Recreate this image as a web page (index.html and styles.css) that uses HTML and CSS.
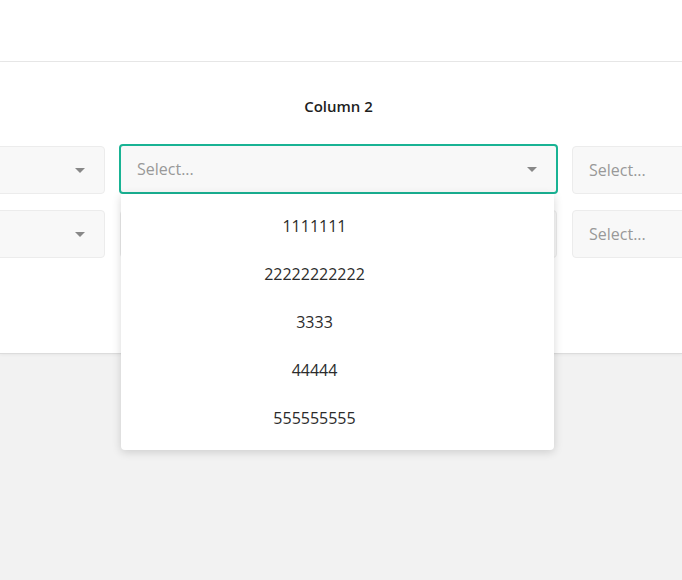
FILE: index.html
```html
<!DOCTYPE html>
<html lang="en">
<head>
<meta charset="utf-8">
<title>Columns</title>
<link rel="stylesheet" href="styles.css">
</head>
<body>
<div class="topbar"></div>
<div class="card">
  <div class="table">
    <div class="head"></div>
    <div class="head">Column 2</div>
    <div class="head"></div>

    <div class="cell">
      <div class="select"><span class="placeholder">Select...</span><span class="arrow"></span></div>
    </div>
    <div class="cell">
      <div class="select focused"><span class="placeholder">Select...</span><span class="arrow"></span></div>
      <ul class="menu">
        <li>1111111</li>
        <li>22222222222</li>
        <li>3333</li>
        <li>44444</li>
        <li>555555555</li>
      </ul>
    </div>
    <div class="cell">
      <div class="select"><span class="placeholder">Select...</span><span class="arrow"></span></div>
    </div>

    <div class="cell">
      <div class="select"><span class="placeholder">Select...</span><span class="arrow"></span></div>
    </div>
    <div class="cell">
      <div class="select"><span class="placeholder">Select...</span><span class="arrow"></span></div>
    </div>
    <div class="cell">
      <div class="select"><span class="placeholder">Select...</span><span class="arrow"></span></div>
    </div>
  </div>
</div>
</body>
</html>
```
FILE: styles.css
```css
html, body {
  overflow: hidden;
}
body {
  margin: 0;
  background: #f2f2f2;
  font-family: "Open Sans", "Liberation Sans", sans-serif;
  color: #333;
  height: 580px;
}
.topbar {
  height: 61px;
  background: #fff;
  border-bottom: 1px solid #e8e8e8;
}
.card {
  height: 292px;
  background: #fff;
  border-bottom: 1px solid #dcdcdc;
  box-shadow: 0 1px 3px rgba(0, 0, 0, 0.05);
  padding-top: 32px;
  box-sizing: border-box;
  overflow-x: clip;
}
.table {
  display: grid;
  grid-template-columns: 437px 437px 437px;
  column-gap: 15px;
  row-gap: 16px;
  margin-left: -332px;
  width: max-content;
}
.head {
  height: 24px;
  line-height: 24px;
  text-align: center;
  font-size: 15px;
  font-weight: 600;
  color: #1e1e1e;
  margin-bottom: 12px;
}
.cell {
  position: relative;
}
.select {
  box-sizing: border-box;
  height: 48px;
  background: #f8f8f8;
  border: 1px solid #ececec;
  border-radius: 4px;
  display: flex;
  align-items: center;
  justify-content: space-between;
  padding: 0 19px 0 16px;
}
.select.focused {
  border: 2px solid #19b394;
  height: 50px;
  margin: -2px -1px 0 -1px;
  padding-right: 19px;
}
.placeholder {
  font-size: 16px;
  color: #999;
}
.arrow {
  width: 0;
  height: 0;
  border-left: 5px solid transparent;
  border-right: 5px solid transparent;
  border-top: 5px solid #888;
}
.menu {
  position: absolute;
  top: 48px;
  left: 1px;
  width: 433px;
  margin: 0;
  padding: 8px 0;
  list-style: none;
  background: #fff;
  border-radius: 0 0 4px 4px;
  box-shadow: 0 2px 10px rgba(0, 0, 0, 0.16);
  z-index: 10;
}
.menu li {
  height: 48px;
  line-height: 48px;
  text-align: center;
  font-size: 16px;
  color: #2b2b2b;
  padding-right: 46px;
}
```
